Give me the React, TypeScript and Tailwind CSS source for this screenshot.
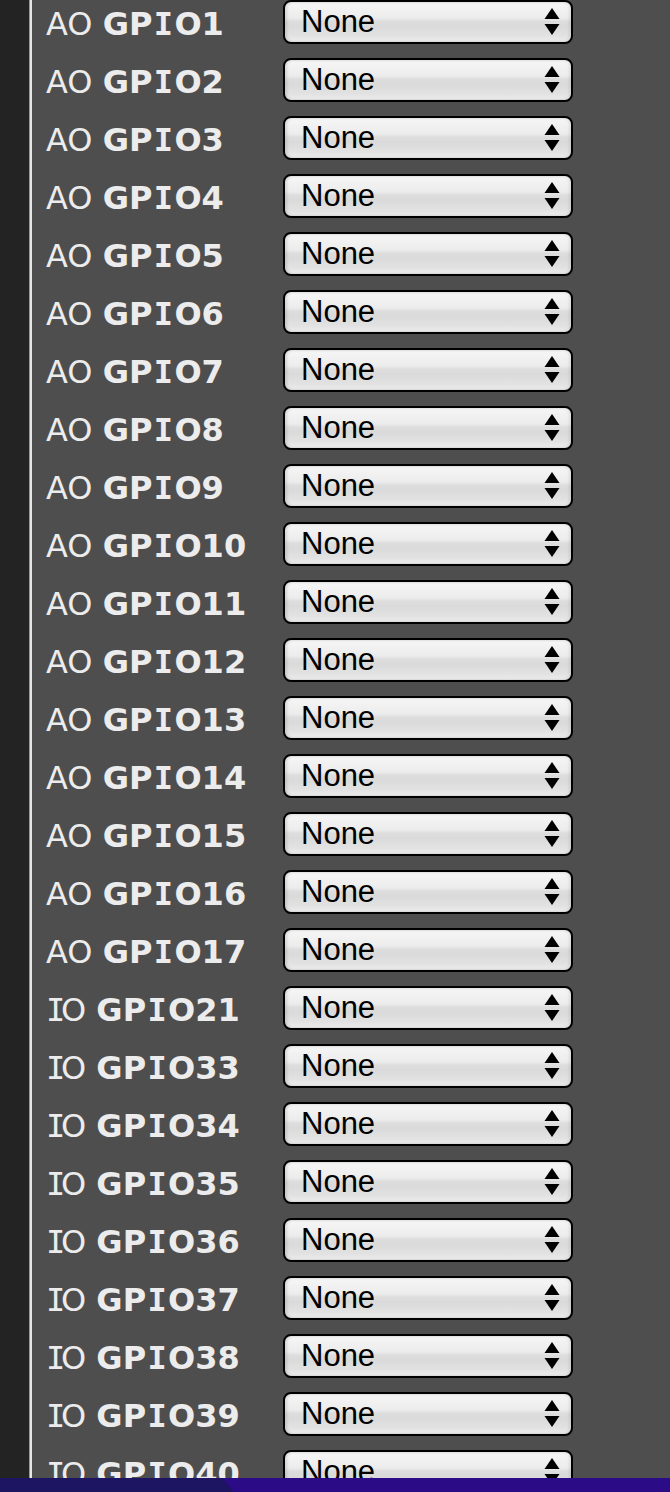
import React from "react";

const rows: [string, string][] = [
  ...Array.from({ length: 17 }, (_, i) => ["AO", `${i + 1}`] as [string, string]),
  ...["21", "33", "34", "35", "36", "37", "38", "39", "40"].map((n) => ["IO", n] as [string, string]),
];

function Arrows() {
  return (
    <svg width="16" height="28" viewBox="0 0 16 28" className="shrink-0">
      <polygon points="8,0 15.5,11 0.5,11" fill="#000" />
      <polygon points="0.5,16 15.5,16 8,27" fill="#000" />
    </svg>
  );
}

function Select() {
  return (
    <div className="w-[290px] h-[44px] shrink-0 rounded-[8px] border-2 border-black flex items-center pl-[16px] pr-[11px] bg-[linear-gradient(to_bottom,#f6f6f6_0%,#ececec_40%,#dddddd_48%,#dadada_60%,#e2e2e2_85%,#eeeeee_100%)] shadow-[inset_2px_0_3px_rgba(0,0,0,0.12),inset_-2px_0_3px_rgba(0,0,0,0.08)]">
      <span className="flex-1 text-[31px] leading-none text-black font-['Liberation_Sans',Arial,sans-serif] -mt-[2px]">
        None
      </span>
      <Arrows />
    </div>
  );
}

function Label({ pre, num }: { pre: string; num: string }) {
  return (
    <div className="w-[237px] shrink-0 pt-[3px] text-[32px] leading-none text-[#ececec] font-['DejaVu_Sans',Verdana,sans-serif] whitespace-nowrap">
      {pre === "IO" ? (
        <>
          <span className="inline-block w-[15px] text-center font-['DejaVu_Sans_Mono',monospace]">I</span>O{" "}
        </>
      ) : (
        <>AO </>
      )}
      <span className="font-bold">
        GP
        <span className="inline-block w-[22px] text-center font-['DejaVu_Sans_Mono',monospace]">I</span>O{num}
      </span>
    </div>
  );
}

export default function App() {
  return (
    <div className="w-[670px] h-[1492px] flex flex-col bg-[#4e4e4e] overflow-hidden">
      <div className="flex h-[1478px] overflow-hidden">
        <div className="w-[29px] shrink-0 bg-[#232323]" />
        <div className="w-[1px] shrink-0 bg-[#9a9a9a]" />
        <div className="w-[2px] shrink-0 bg-[#e6e6e6]" />
        <div className="flex-1 flex flex-col gap-[14px] pl-[14px]">
          {rows.map(([pre, num]) => (
            <div key={pre + num} className="flex items-center h-[44px] shrink-0">
              <Label pre={pre} num={num} />
              <Select />
            </div>
          ))}
        </div>
      </div>
      <div className="h-[14px] shrink-0 bg-[#2b0c86] relative overflow-hidden">
        <div className="absolute left-0 top-0 h-full w-[234px] bg-[#1d1462] [clip-path:polygon(0_0,222px_0,234px_100%,0_100%)]" />
      </div>
    </div>
  );
}
